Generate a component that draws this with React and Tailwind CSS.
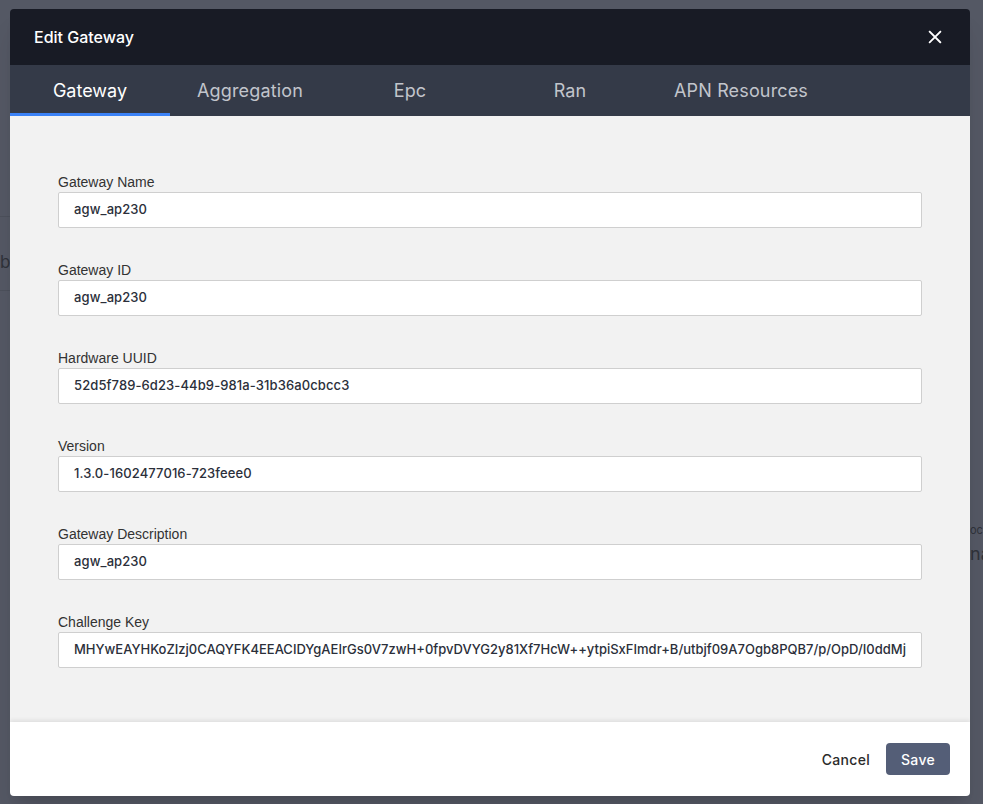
import React from 'react';

const fields = [
  { label: 'Gateway Name', value: 'agw_ap230' },
  { label: 'Gateway ID', value: 'agw_ap230' },
  { label: 'Hardware UUID', value: '52d5f789-6d23-44b9-981a-31b36a0cbcc3' },
  { label: 'Version', value: '1.3.0-1602477016-723feee0' },
  { label: 'Gateway Description', value: 'agw_ap230' },
  {
    label: 'Challenge Key',
    value:
      'MHYwEAYHKoZIzj0CAQYFK4EEACIDYgAEIrGs0V7zwH+0fpvDVYG2y81Xf7HcW++ytpiSxFImdr+B/utbjf09A7Ogb8PQB7/p/OpD/I0ddMj',
    tight: true,
  },
];

const tabs = ['Gateway', 'Aggregation', 'Epc', 'Ran', 'APN Resources'];

const App = () => {
  return (
    <div className="relative h-[804px] w-[983px] overflow-hidden bg-[#545864] font-['Inter',sans-serif]">
      {/* dimmed page behind the dialog */}
      <div className="absolute left-0 top-[216px] h-px w-[10px] bg-[#4c505b]" />
      <div className="absolute left-0 top-[290px] h-px w-[10px] bg-[#4c505b]" />
      <div className="absolute left-0 top-[250px] text-[17px] text-[#2f323a]">b</div>
      <div className="absolute left-[970px] top-[522px] text-[11px] text-[#2f323a]">oc</div>
      <div className="absolute left-[970px] top-[540px] text-[18px] text-[#2f323a]">na</div>

      <div className="absolute left-[10px] top-[9px] flex h-[787px] w-[960px] flex-col overflow-hidden rounded-[4px] shadow-xl">
        <div className="flex h-[56px] items-center justify-between bg-[#181b25] pl-[24px] pr-[26px]">
          <span className="text-[16px] font-medium text-white">Edit Gateway</span>
          <svg width="18" height="18" viewBox="0 0 24 24" fill="none" stroke="white" strokeWidth="2.4" strokeLinecap="square">
            <path d="M5 5l14 14M19 5L5 19" />
          </svg>
        </div>

        <div className="flex h-[51px] bg-[#343a48]">
          {tabs.map((t, i) => (
            <div
              key={t}
              className={
                i === 0
                  ? 'flex min-w-[160px] items-center justify-center border-b-[3px] border-[#3b82f6] px-[24px] pt-[3px] text-[18px] text-white'
                  : 'flex min-w-[160px] items-center justify-center px-[24px] text-[18px] tracking-[0.15px] text-[#c2c5cc]'
              }
            >
              {t}
            </div>
          ))}
        </div>

        <div className="flex flex-1 flex-col gap-[32px] bg-[#f2f2f2] px-[48px] pt-[56px]">
          {fields.map((f) => (
            <div key={f.label} className="flex flex-col">
              <label className="h-[20px] font-['Liberation_Sans',sans-serif] text-[14px] leading-[20px] text-[#333]">
                {f.label}
              </label>
              <div
                className={
                  f.tight
                    ? 'flex h-[36px] items-center overflow-hidden whitespace-nowrap rounded-[2px] border border-[#cfcfcf] bg-white px-[15px] text-[13px] font-medium tracking-[0px] text-[#2b2f3a]'
                    : 'flex h-[36px] items-center overflow-hidden whitespace-nowrap rounded-[2px] border border-[#cfcfcf] bg-white px-[15px] text-[13px] font-medium tracking-[0.1px] text-[#2b2f3a]'
                }
              >
                {f.value}
              </div>
            </div>
          ))}
        </div>

        <div className="flex h-[74px] items-center justify-end gap-[8px] bg-white pr-[20px] shadow-[0_-2px_4px_rgba(0,0,0,0.08)]">
          <button className="px-[8px] text-[14px] font-medium tracking-[0.3px] text-[#2b2b2b]">Cancel</button>
          <button className="h-[32px] w-[64px] rounded-[4px] bg-[#545e77] text-[14px] font-medium tracking-[0.3px] text-white">
            Save
          </button>
        </div>
      </div>
    </div>
  );
};

export default App;
